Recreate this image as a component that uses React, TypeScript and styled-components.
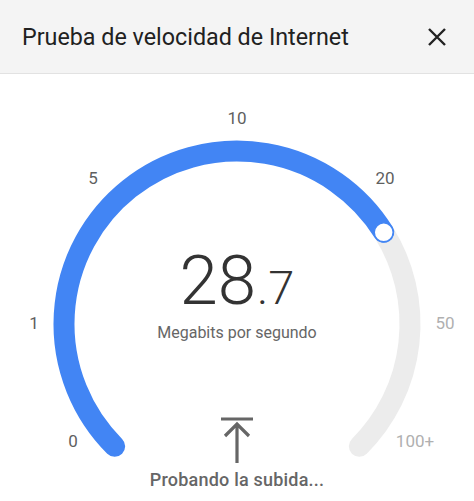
import { createGlobalStyle } from "styled-components";
import styled from "styled-components";

const CX = 237;
const CY = 324;
const R = 173;
const VALUE_ANGLE = 58;

const GlobalStyle = createGlobalStyle`
  html, body {
    margin: 0;
    padding: 0;
    background: #ffffff;
  }
  body {
    font-family: Roboto, "Noto Sans", "Liberation Sans", sans-serif;
  }
`;

const Page = styled.div`
  width: 474px;
  height: 501px;
  display: flex;
  flex-direction: column;
  overflow: hidden;
`;

const Header = styled.div`
  height: 73px;
  flex-shrink: 0;
  display: flex;
  align-items: center;
  justify-content: space-between;
  padding: 0 26px 0 22px;
  background: #f4f4f4;
  border-bottom: 1px solid #e2e2e2;
`;

const Title = styled.div`
  font-size: 23.3px;
  color: #212121;
  margin-top: 1px;
`;

const CloseButton = styled.button`
  border: 0;
  background: none;
  padding: 0;
  width: 22px;
  height: 22px;
  display: flex;
  align-items: center;
  justify-content: center;
`;

const Gauge = styled.div`
  position: relative;
  flex: 1;
  display: flex;
  flex-direction: column;
  align-items: center;
`;

const Dial = styled.svg`
  position: absolute;
  left: 0;
  top: 0;
`;

const Readout = styled.div`
  position: relative;
  margin-top: 172px;
  display: flex;
  align-items: baseline;
  color: #333;
  font-weight: 300;
`;

const Whole = styled.span`
  font-size: 69px;
  line-height: 70px;
`;

const Fraction = styled.span`
  font-size: 47px;
  margin-left: 1px;
`;

const Unit = styled.div`
  position: relative;
  font-size: 16px;
  color: #666;
  margin-top: 7px;
`;

const Status = styled.div`
  position: relative;
  margin-top: 75px;
  display: flex;
  flex-direction: column;
  align-items: center;
  gap: 6px;
`;

const StatusText = styled.div`
  font-size: 18px;
  font-weight: 500;
  color: #666;
  letter-spacing: 0.2px;
`;

const point = (deg: number) => {
  const a = (deg * Math.PI) / 180;
  return [CX + R * Math.sin(a), CY - R * Math.cos(a)];
};

const arc = (from: number, to: number) => {
  const [x1, y1] = point(from);
  const [x2, y2] = point(to);
  const large = to - from > 180 ? 1 : 0;
  return `M ${x1} ${y1} A ${R} ${R} 0 ${large} 1 ${x2} ${y2}`;
};

const labels = [
  { text: "0", x: 73, y: 447, active: true },
  { text: "1", x: 34, y: 329, active: true },
  { text: "5", x: 93, y: 184, active: true },
  { text: "10", x: 237, y: 124, active: true },
  { text: "20", x: 385, y: 184, active: true },
  { text: "50", x: 445, y: 329, active: false },
  { text: "100+", x: 415, y: 447, active: false },
];

export default function App() {
  const [dx, dy] = point(VALUE_ANGLE);
  return (
    <Page>
      <GlobalStyle />
      <Header>
        <Title>Prueba de velocidad de Internet</Title>
        <CloseButton aria-label="Cerrar">
          <svg width="18" height="18" viewBox="0 0 18 18">
            <path d="M1 1 L17 17 M17 1 L1 17" stroke="#222" strokeWidth="2.4" />
          </svg>
        </CloseButton>
      </Header>
      <Gauge>
        <Dial width="474" height="427" viewBox="0 74 474 427">
          <path d={arc(VALUE_ANGLE, 135)} fill="none" stroke="#ececec" strokeWidth="21" strokeLinecap="round" />
          <path d={arc(-135, VALUE_ANGLE)} fill="none" stroke="#4285f4" strokeWidth="21" strokeLinecap="round" />
          <circle cx={dx} cy={dy} r="9.5" fill="#fff" stroke="#4285f4" strokeWidth="1.5" />
          {labels.map((l) => (
            <text
              key={l.text}
              x={l.x}
              y={l.y}
              textAnchor="middle"
              fontSize="17"
              fontFamily="Roboto, sans-serif"
              fill={l.active ? "#5f5f5f" : "#b0b0b0"}
            >
              {l.text}
            </text>
          ))}
        </Dial>
        <Readout>
          <Whole>28</Whole>
          <Fraction>.7</Fraction>
        </Readout>
        <Unit>Megabits por segundo</Unit>
        <Status>
          <svg width="34" height="46" viewBox="0 0 34 46">
            <path d="M1 2 H33 M17 7 V46 M5 19 L17 7 L29 19" fill="none" stroke="#666" strokeWidth="3.2" />
          </svg>
          <StatusText>Probando la subida...</StatusText>
        </Status>
      </Gauge>
    </Page>
  );
}
